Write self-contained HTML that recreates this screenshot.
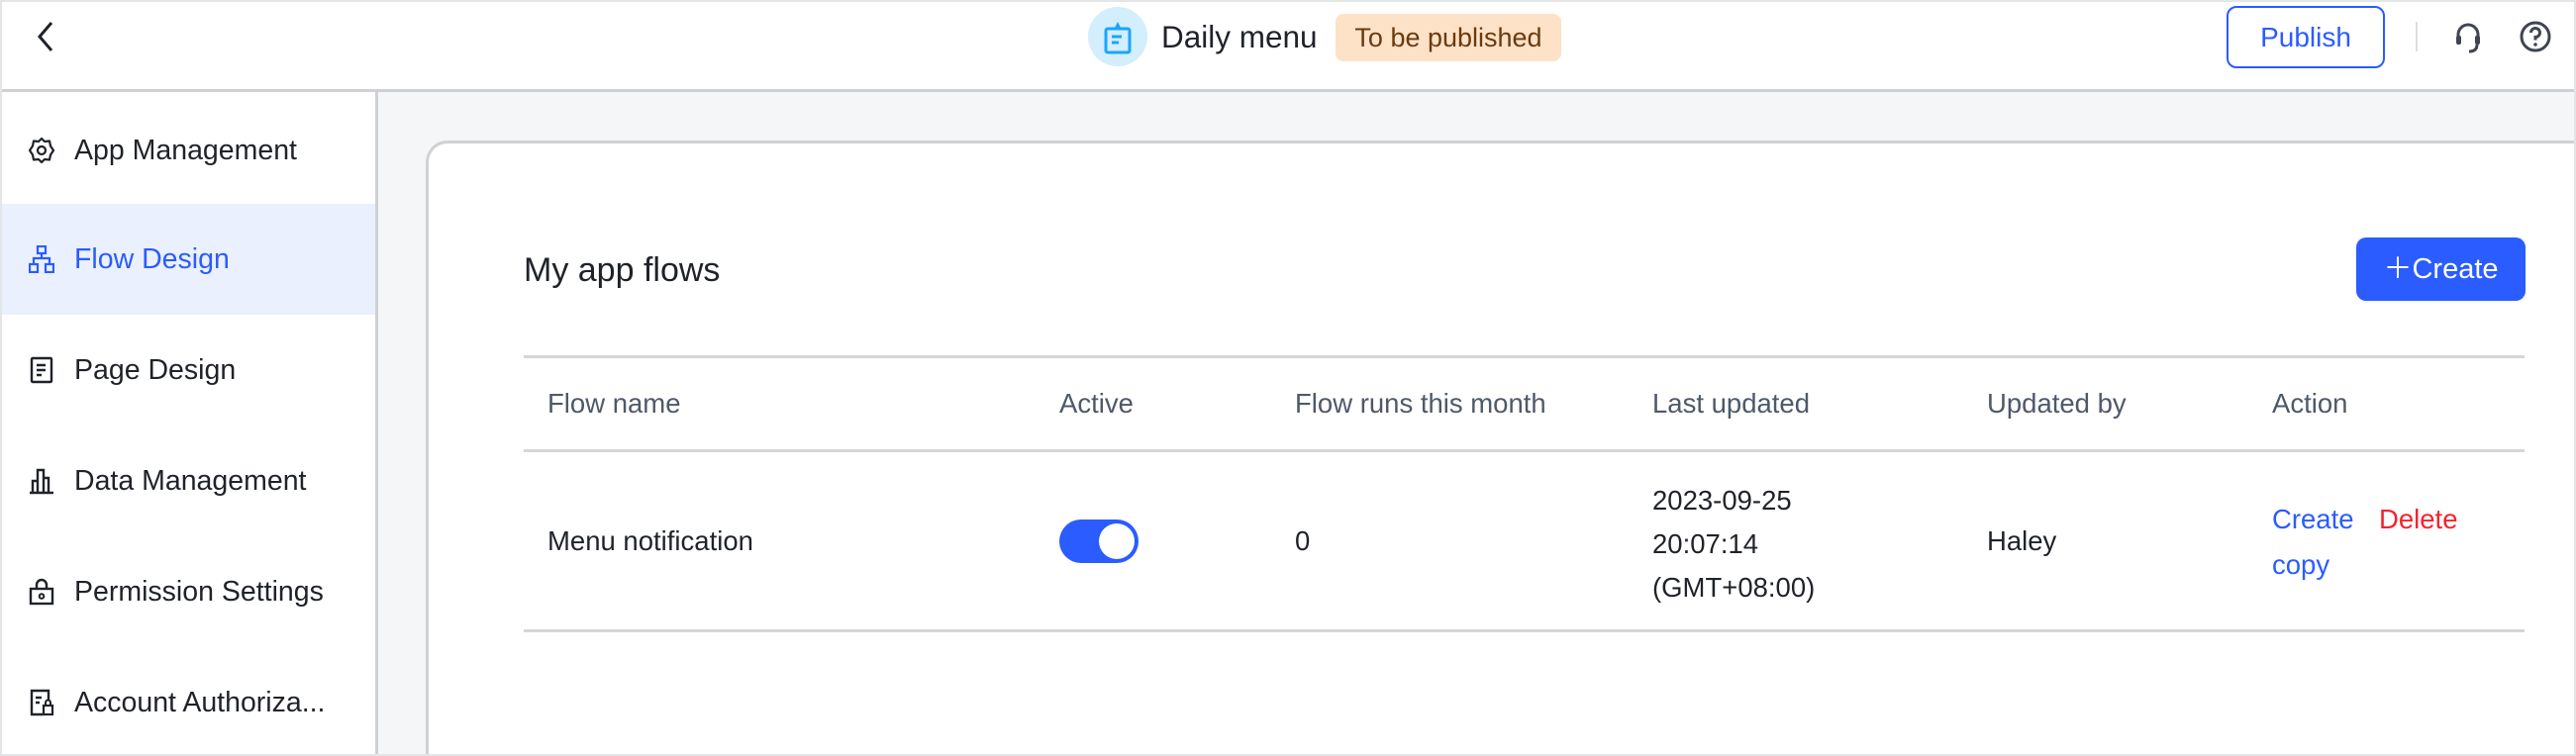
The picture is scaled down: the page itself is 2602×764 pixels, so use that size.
<!DOCTYPE html>
<html><head><meta charset="utf-8"><style>
*{box-sizing:border-box;margin:0;padding:0}
html,body{width:2602px;height:764px;overflow:hidden}
body{background:#fff;font-family:"Liberation Sans",sans-serif;color:#1f2329}
#wrap{position:relative;width:2602px;height:764px;overflow:hidden}
.abs{position:absolute}
.frame{position:absolute;left:0;top:0;width:2602px;height:764px;border:2px solid #e4e5e7;pointer-events:none}
.hdr{left:0;top:0;width:2602px;height:93px;border-bottom:3px solid #cfd0d3;background:#fff}
.side{left:0;top:93px;width:382px;height:671px;border-right:3px solid #d0d1d4;background:#fff}
.item{position:absolute;left:0;width:379px;height:112px;display:flex;align-items:center;font-size:28.5px;color:#1f2329}
.item svg{position:absolute;left:29px;width:26px;height:28px}
.item span{position:absolute;left:75px}
.main{left:382px;top:93px;width:2220px;height:671px;background:#f5f6f7}
.card{left:430px;top:142px;width:2172px;height:622px;background:#fff;border:3px solid #d0d1d4;border-right:none;border-bottom:none;border-radius:22px 0 0 0}
.th{position:absolute;top:390px;font-size:27.5px;color:#4e5969;line-height:36px}
.td{position:absolute;font-size:27.5px;color:#1f2329;line-height:36px}
.line{position:absolute;left:529px;width:2021px;height:3px;background:#d5d6d8}
</style></head><body><div id="wrap">
<div class="abs hdr"></div>
<svg class="abs" style="left:34px;top:20px" width="24" height="34" viewBox="0 0 24 34"><path d="M18 3 L6 17 L18 31" fill="none" stroke="#1f2329" stroke-width="3"/></svg>
<div class="abs" style="left:1099px;top:7px;width:60px;height:60px;border-radius:50%;background:#d3eefc"></div>
<svg class="abs" style="left:1114px;top:20px" width="30" height="36" viewBox="0 0 30 36"><path d="M15 2 L18 8 H12 Z" fill="#1aa5ff"/><rect x="3" y="9" width="24" height="24" rx="2" fill="none" stroke="#1aa5ff" stroke-width="3"/><path d="M9 17H19M9 23H16" stroke="#1aa5ff" stroke-width="3"/></svg>
<div class="abs" style="left:1173px;top:18px;font-size:31.5px;line-height:38px;color:#1f2329">Daily menu</div>
<div class="abs" style="left:1349px;top:14px;width:228px;height:48px;border-radius:8px;background:#fde2c8;color:#6b3a0f;font-size:27px;line-height:48px;text-align:center">To be published</div>
<div class="abs" style="left:2249px;top:6px;width:160px;height:63px;border:2px solid #2a5cff;border-radius:10px;color:#2a5cff;font-size:28px;line-height:59px;text-align:center">Publish</div>
<div class="abs" style="left:2440px;top:22px;width:2px;height:30px;background:#dcdde0"></div>
<svg class="abs" style="left:2476px;top:20px" width="34" height="36" viewBox="0 0 34 36"><path d="M7 20 V15 A10 10 0 0 1 27 15 V20" fill="none" stroke="#3f4550" stroke-width="3"/><rect x="5" y="16" width="5" height="9" rx="2" fill="#3f4550"/><rect x="24" y="16" width="5" height="9" rx="2" fill="#3f4550"/><path d="M26 25 Q26 32 18 32" fill="none" stroke="#3f4550" stroke-width="3"/></svg>
<svg class="abs" style="left:2544px;top:20px" width="34" height="34" viewBox="0 0 34 34"><circle cx="17" cy="17" r="14" fill="none" stroke="#3f4550" stroke-width="3"/><path d="M12.5 13 A4.5 4.5 0 1 1 17 17.5 V20.5" fill="none" stroke="#3f4550" stroke-width="3"/><circle cx="17" cy="25" r="1.8" fill="#3f4550"/></svg>

<div class="abs side">
 <div class="item" style="top:3px"><svg viewBox="0 0 26 28"><circle cx="13" cy="14" r="4" fill="none" stroke="#1f2329" stroke-width="2.2"/><path d="M13 2 L16 5 L21 4.5 L22 9.5 L25 14 L22 18.5 L21 23.5 L16 23 L13 26 L10 23 L5 23.5 L4 18.5 L1 14 L4 9.5 L5 4.5 L10 5 Z" fill="none" stroke="#1f2329" stroke-width="2.2" stroke-linejoin="round"/></svg><span>App Management</span></div>
 <div class="item" style="top:113px;background:#ebf0fe;color:#2a5cff"><svg viewBox="0 0 26 28"><rect x="9" y="1" width="8" height="7" fill="none" stroke="#2a5cff" stroke-width="2.2"/><path d="M13 8V13M5 19V13H21V19" fill="none" stroke="#2a5cff" stroke-width="2.2"/><rect x="1" y="19" width="8" height="8" fill="none" stroke="#2a5cff" stroke-width="2.2"/><rect x="17" y="19" width="8" height="8" fill="none" stroke="#2a5cff" stroke-width="2.2"/></svg><span>Flow Design</span></div>
 <div class="item" style="top:225px"><svg viewBox="0 0 26 28"><rect x="3" y="2" width="20" height="24" rx="1" fill="none" stroke="#1f2329" stroke-width="2.4"/><path d="M8 9H17M8 14H17M8 19H13" stroke="#1f2329" stroke-width="2.4"/></svg><span>Page Design</span></div>
 <div class="item" style="top:337px"><svg viewBox="0 0 26 28"><path d="M1 26H25M4 26V14H9V26M9 26V3H15V26M15 26V11H20V26" fill="none" stroke="#1f2329" stroke-width="2.4"/></svg><span>Data Management</span></div>
 <div class="item" style="top:449px"><svg viewBox="0 0 26 28"><path d="M8 11V7A5 5 0 0 1 18 7V11" fill="none" stroke="#1f2329" stroke-width="2.4"/><rect x="2" y="11" width="22" height="15" fill="none" stroke="#1f2329" stroke-width="2.4"/><circle cx="13" cy="18.5" r="2.3" fill="none" stroke="#1f2329" stroke-width="2"/></svg><span>Permission Settings</span></div>
 <div class="item" style="top:561px"><svg viewBox="0 0 26 28"><path d="M14 26H3V2H20V12" fill="none" stroke="#1f2329" stroke-width="2.4"/><path d="M7 9H13M7 14H11" stroke="#1f2329" stroke-width="2.4"/><rect x="15" y="17" width="9" height="9" fill="none" stroke="#1f2329" stroke-width="2.2"/><path d="M17 17V14A2.5 2.5 0 0 1 22 14V17" fill="none" stroke="#1f2329" stroke-width="2"/></svg><span>Account Authoriza...</span></div>
</div>

<div class="abs main"></div>
<div class="abs card"></div>
<div class="abs" style="left:529px;top:253px;font-size:34px;line-height:40px;color:#1f2329">My app flows</div>
<div class="abs" style="left:2380px;top:240px;width:171px;height:64px;border-radius:10px;background:#2a5cff;color:#fff;font-size:29px;line-height:64px;text-align:center">＋Create</div>
<div class="line" style="top:359px"></div>
<div class="th" style="left:553px">Flow name</div>
<div class="th" style="left:1070px">Active</div>
<div class="th" style="left:1308px">Flow runs this month</div>
<div class="th" style="left:1669px">Last updated</div>
<div class="th" style="left:2007px">Updated by</div>
<div class="th" style="left:2295px">Action</div>
<div class="line" style="top:454px"></div>
<div class="td" style="left:553px;top:529px">Menu notification</div>
<div class="abs" style="left:1070px;top:525px;width:80px;height:44px;border-radius:22px;background:#2a5cff"></div>
<div class="abs" style="left:1110px;top:529px;width:36px;height:36px;border-radius:50%;background:#fff"></div>
<div class="td" style="left:1308px;top:529px">0</div>
<div class="td" style="left:1669px;top:484px;line-height:44px">2023-09-25<br>20:07:14<br>(GMT+08:00)</div>
<div class="td" style="left:2007px;top:529px">Haley</div>
<div class="td" style="left:2295px;top:502px;line-height:46px;color:#2a5cff">Create<br>copy</div>
<div class="td" style="left:2403px;top:502px;line-height:46px;color:#f5222d">Delete</div>
<div class="line" style="top:636px"></div>
<div class="frame"></div>
</div></body></html>
